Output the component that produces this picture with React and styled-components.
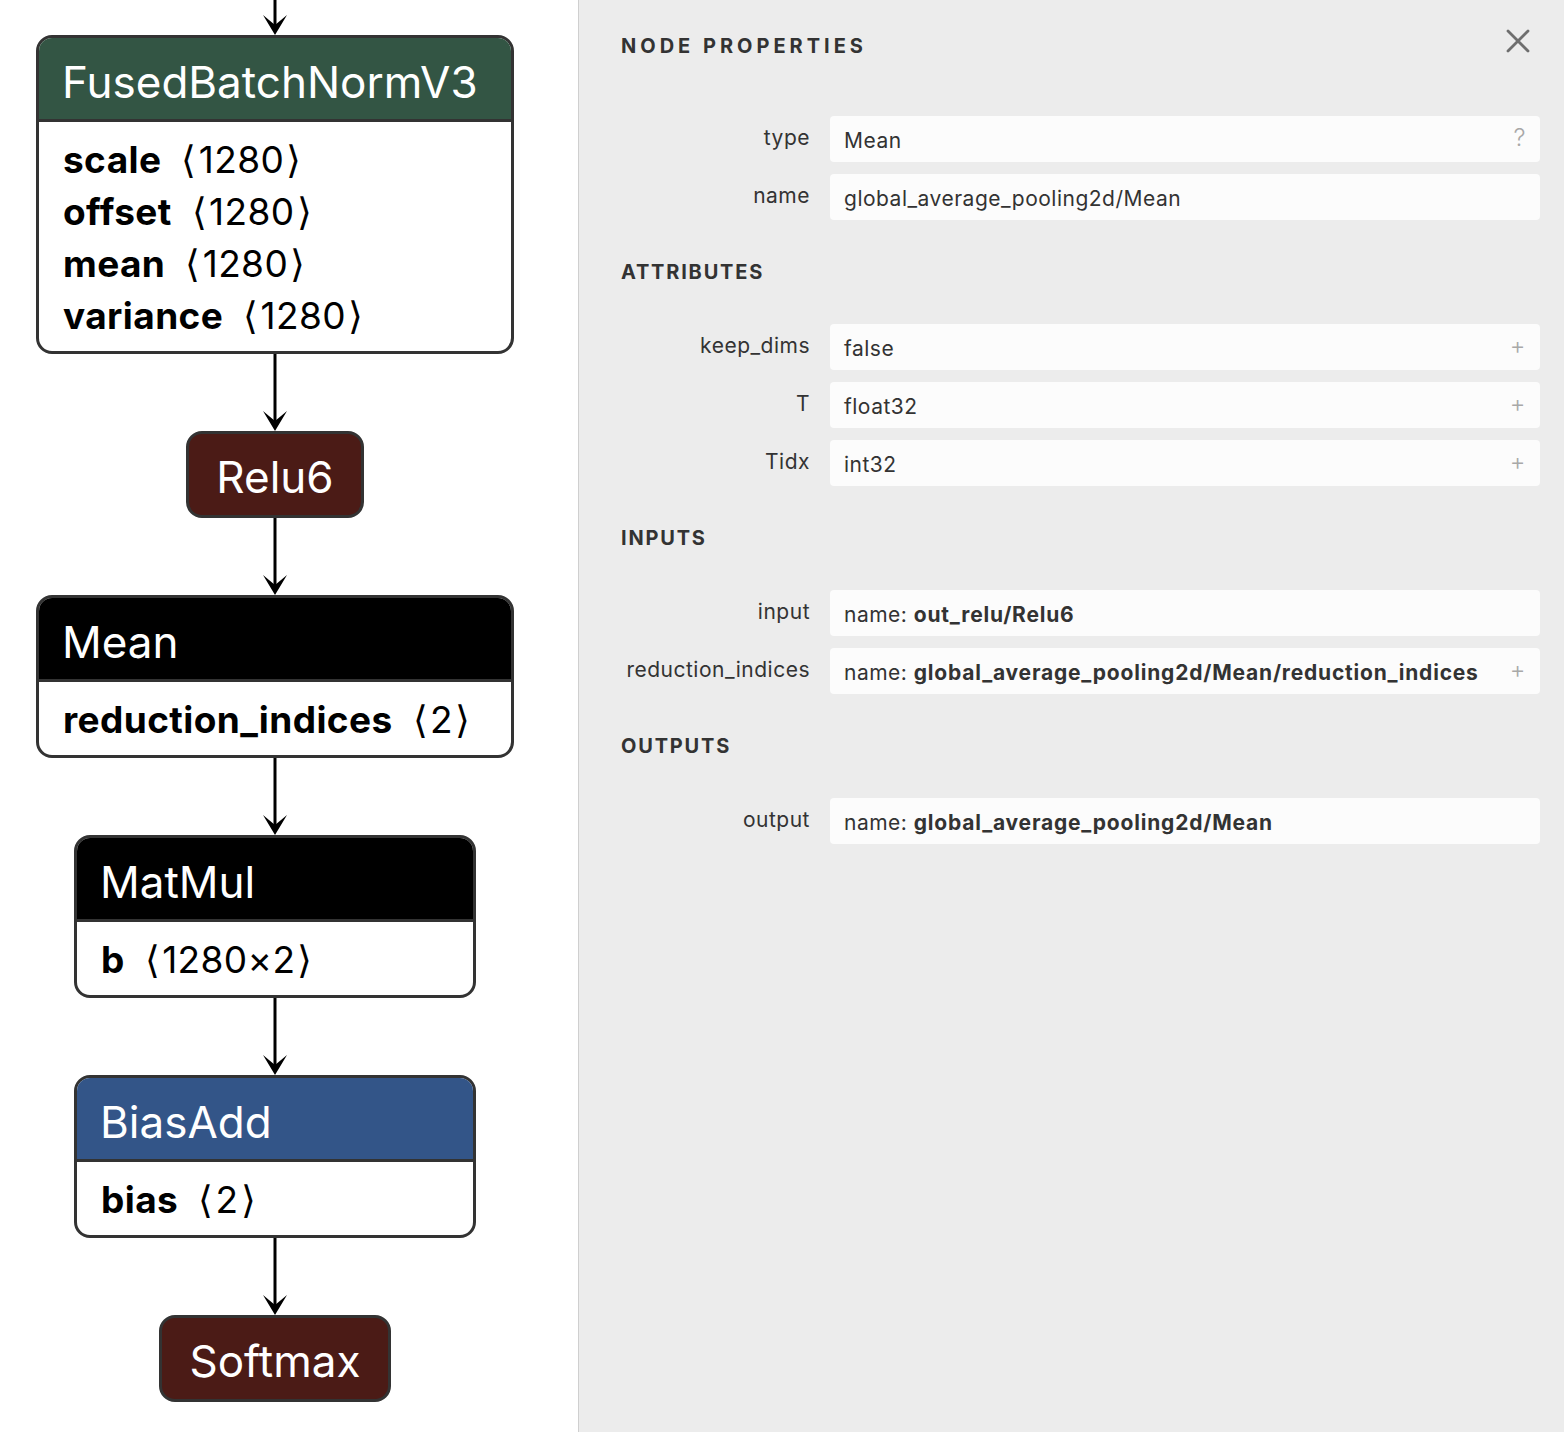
import styled, { createGlobalStyle } from "styled-components"

const GlobalStyle = createGlobalStyle`
    html, body {
        margin: 0;
        padding: 0;
    }
    body {
        font-family: "Inter", "Noto Sans", "DejaVu Sans", sans-serif;
        color: #333333;
        background: #ffffff;
    }
    * {
        box-sizing: border-box;
    }
`

const graph = [
    { title: "FusedBatchNormV3", color: "#335544", width: 478, rows: [["scale", "1280"], ["offset", "1280"], ["mean", "1280"], ["variance", "1280"]] },
    { title: "Relu6", color: "#4b1b16", width: 178 },
    { title: "Mean", color: "#000000", width: 478, rows: [["reduction_indices", "2"]] },
    { title: "MatMul", color: "#000000", width: 402, rows: [["b", "1280×2"]] },
    { title: "BiasAdd", color: "#335588", width: 402, rows: [["bias", "2"]] },
    { title: "Softmax", color: "#4b1b16", width: 232 },
]

const sections = [
    { rows: [{ label: "type", value: "Mean", icon: "?" }, { label: "name", value: "global_average_pooling2d/Mean" }] },
    {
        title: "Attributes",
        rows: [
            { label: "keep_dims", value: "false", icon: "+" },
            { label: "T", value: "float32", icon: "+" },
            { label: "Tidx", value: "int32", icon: "+" },
        ],
    },
    {
        title: "Inputs",
        rows: [
            { label: "input", name: "out_relu/Relu6" },
            { label: "reduction_indices", name: "global_average_pooling2d/Mean/reduction_indices", icon: "+" },
        ],
    },
    { title: "Outputs", rows: [{ label: "output", name: "global_average_pooling2d/Mean" }] },
]

function Arrow({ height }) {
    return (
        <svg width="26" height={height} viewBox={`0 0 26 ${height}`}>
            <line x1="13" y1="0" x2="13" y2={height - 8} stroke="#000" strokeWidth="3" />
            <path d={`M13 ${height} L1 ${height - 20} L13 ${height - 10} L25 ${height - 20} Z`} fill="#000" />
        </svg>
    )
}

function GraphNode({ node }) {
    if (!node.rows) {
        return <SimpleNode $color={node.color} style={{ width: node.width }}>{node.title}</SimpleNode>
    }
    return (
        <Node style={{ width: node.width }}>
            <NodeHeader $color={node.color}>{node.title}</NodeHeader>
            <NodeBody>
                {node.rows.map(([name, shape]) => (
                    <NodeRow key={name}>
                        <b>{name}</b>
                        <Shape><Bracket>⟨</Bracket>{shape}<Bracket>⟩</Bracket></Shape>
                    </NodeRow>
                ))}
            </NodeBody>
        </Node>
    )
}

function CloseIcon() {
    return (
        <svg width="24" height="24" viewBox="0 0 24 24">
            <path d="M2 2 L22 22 M22 2 L2 22" stroke="#6e6e6e" strokeWidth="2.8" strokeLinecap="round" />
        </svg>
    )
}

export default function App() {
    return (
        <>
            <GlobalStyle />
            <Page>
                <GraphPane>
                    <Column>
                        {graph.map((node, i) => (
                            <Step key={node.title}>
                                <Arrow height={i == 0 ? 35 : 77} />
                                <GraphNode node={node} />
                            </Step>
                        ))}
                    </Column>
                </GraphPane>
                <Sidebar>
                    <SidebarHeader>
                        <Heading $wide>Node Properties</Heading>
                        <Close><CloseIcon /></Close>
                    </SidebarHeader>
                    {sections.map((section, i) => (
                        <Section key={i} $first={i == 0}>
                            {section.title && <Heading>{section.title}</Heading>}
                            <Rows $first={i == 0}>
                                {section.rows.map((row) => (
                                    <PropRow key={row.label}>
                                        <Label>{row.label}</Label>
                                        <Value>
                                            <span>
                                                {row.name ? <>name: <b>{row.name}</b></> : row.value}
                                            </span>
                                            {row.icon && <Toggle>{row.icon}</Toggle>}
                                        </Value>
                                    </PropRow>
                                ))}
                            </Rows>
                        </Section>
                    ))}
                </Sidebar>
            </Page>
        </>
    )
}

const Page = styled.div`
    display: flex;
    width: 1564px;
    height: 1432px;
    overflow: hidden;
`

const GraphPane = styled.div`
    width: 579px;
    flex-shrink: 0;
    background: #ffffff;
    border-right: 1px solid #cfcfcf;
`

const Column = styled.div`
    width: 550px;
    display: flex;
    flex-direction: column;
    align-items: center;
`

const Step = styled.div`
    display: flex;
    flex-direction: column;
    align-items: center;

    svg {
        display: block;
    }
`

const Node = styled.div`
    border: 3px solid #333333;
    border-radius: 16px;
    overflow: hidden;
    background: #ffffff;
`

const NodeHeader = styled.div`
    height: 84px;
    background: ${(p) => p.$color};
    border-bottom: 3px solid #333333;
    color: #ffffff;
    font-size: 44px;
    line-height: 81px;
    padding: 4px 23px 0;
    white-space: nowrap;
`

const SimpleNode = styled.div`
    height: 87px;
    border: 3px solid #333333;
    border-radius: 16px;
    background: ${(p) => p.$color};
    color: #ffffff;
    font-size: 44px;
    line-height: 76px;
    padding-top: 5px;
    text-align: center;
    white-space: nowrap;
`

const NodeBody = styled.div`
    padding: 12px 24px 9px;
`

const NodeRow = styled.div`
    font-size: 37px;
    letter-spacing: 0.4px;
    line-height: 52px;
    color: #000000;
    white-space: nowrap;
    display: flex;
    align-items: baseline;

    b {
        font-weight: 700;
    }
`

const Shape = styled.span`
    font-weight: 400;
    margin-left: 18px;
`

const Bracket = styled.span`
    font-family: "DejaVu Sans", sans-serif;
    font-weight: 300;
    font-size: 38px;
    margin: 0 2px;
`

const Sidebar = styled.div`
    flex: 1;
    background: #ececec;
    padding: 34px 24px 0 42px;
`

const SidebarHeader = styled.div`
    display: flex;
    justify-content: space-between;
    align-items: flex-start;
`

const Close = styled.div`
    margin: -5px 10px 0 0;
    line-height: 0;
    cursor: pointer;
`

const Heading = styled.div`
    font-size: 20px;
    line-height: 24px;
    font-weight: 700;
    letter-spacing: ${(p) => (p.$wide ? "4px" : "1.8px")};
    text-transform: uppercase;
    color: #333333;
`

const Section = styled.div`
    margin-top: ${(p) => (p.$first ? "58px" : "40px")};
`

const Rows = styled.div`
    display: flex;
    flex-direction: column;
    gap: 12px;
    margin-top: ${(p) => (p.$first ? "0" : "40px")};
`

const PropRow = styled.div`
    display: grid;
    grid-template-columns: 189px 1fr;
    column-gap: 20px;
    align-items: center;
`

const Label = styled.div`
    text-align: right;
    font-size: 21px;
    letter-spacing: 0.5px;
    padding-bottom: 4px;
    color: #333333;
    white-space: nowrap;
`

const Value = styled.div`
    height: 46px;
    display: flex;
    align-items: center;
    justify-content: space-between;
    padding: 2px 14px 0;
    background: #fcfcfc;
    border-radius: 4px;
    font-size: 21px;
    letter-spacing: 0.5px;
    color: #333333;
    white-space: nowrap;

    b {
        font-weight: 700;
        letter-spacing: 0.8px;
    }
`

const Toggle = styled.span`
    color: #a8a8a8;
    font-size: 24px;
    font-weight: 300;
    margin-top: -6px;
`
